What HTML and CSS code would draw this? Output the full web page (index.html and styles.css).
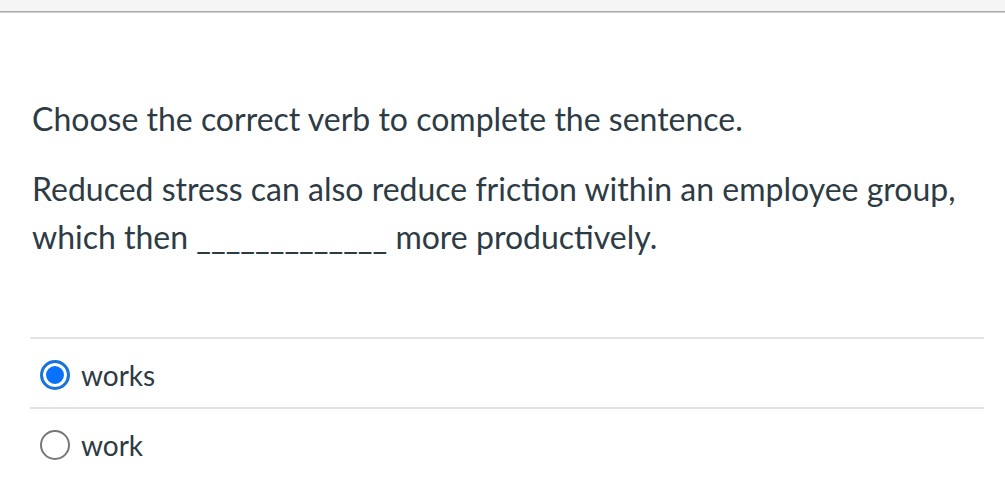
FILE: index.html
```html
<!DOCTYPE html>
<html lang="en">
<head>
  <meta charset="UTF-8" />
  <meta name="viewport" content="width=device-width, initial-scale=1.0"/>
  <title>Quiz Question</title>
  <link rel="stylesheet" href="styles.css">
</head>
<body>
  <div class="top-bar"></div>
  <div class="question">
    <div class="question-text">
      <p>Choose the correct verb to complete the sentence.</p>
      <p>Reduced stress can also reduce friction within an employee group, which then _____________ more productively.</p>
    </div>
    <div class="answers">
      <label class="answer">
        <span class="radio checked"></span>
        <span class="answer-label">works</span>
      </label>
      <label class="answer">
        <span class="radio"></span>
        <span class="answer-label">work</span>
      </label>
    </div>
  </div>
</body>
</html>
```

FILE: styles.css
```css
body {
  margin: 0;
  background-color: #fff;
  color: #2d3b45;
  font-family: Lato, "Liberation Sans", sans-serif;
}
.top-bar {
  height: 11px;
  background-color: #f5f5f5;
  border-bottom: 1px solid #a9a9a9;
  box-shadow: 0 1px 0 #cfcfcf;
}
.question {
  padding: 0 21px 0 30px;
}
.question-text {
  padding: 83px 2px 0;
}
.question-text p {
  margin: 0 0 22px;
  font-size: 32px;
  line-height: 48px;
}
.answers {
  margin-top: 76px;
}
.answer {
  display: flex;
  align-items: center;
  gap: 11px;
  height: 68px;
  padding-left: 10px;
  padding-top: 3px;
  box-sizing: border-box;
  border-top: 2px solid #e3e3e3;
  height: 70px;
}
.radio {
  box-sizing: border-box;
  width: 30px;
  height: 30px;
  border-radius: 50%;
  border: 2px solid #777;
  background: #fff;
}
.radio.checked {
  border: 3px solid #1a73d8;
  box-shadow: inset 0 0 0 3px #fff, inset 0 0 0 12px #0a72fa;
}
.answer-label {
  font-size: 28px;
}
```
